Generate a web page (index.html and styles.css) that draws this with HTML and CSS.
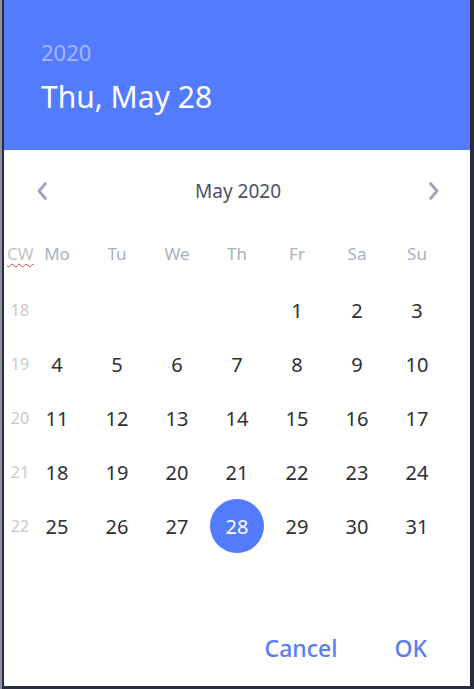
FILE: index.html
```html
<!DOCTYPE html>
<html>
<head>
<meta charset="utf-8">
<link rel="stylesheet" href="styles.css">
</head>
<body>
<div class="frame">
  <div class="card">
    <header class="head">
      <div class="year">2020</div>
      <div class="date">Thu, May 28</div>
    </header>
    <div class="nav">
      <svg class="chev" width="14" height="20" viewBox="0 0 14 20"><path d="M10.5 2.5 L4 10 L10.5 17.5" fill="none" stroke="#9ca3bb" stroke-width="2.8" stroke-linecap="round" stroke-linejoin="round"/></svg>
      <div class="month">May 2020</div>
      <svg class="chev right" width="14" height="20" viewBox="0 0 14 20"><path d="M3.5 2.5 L10 10 L3.5 17.5" fill="none" stroke="#9ca3bb" stroke-width="2.8" stroke-linecap="round" stroke-linejoin="round"/></svg>
    </div>
    <div class="grid">
      <div class="wk cw"><span>CW</span></div>
      <div class="dn">Mo</div><div class="dn">Tu</div><div class="dn">We</div><div class="dn">Th</div><div class="dn">Fr</div><div class="dn">Sa</div><div class="dn">Su</div>

      <div class="wk">18</div>
      <div class="d"></div><div class="d"></div><div class="d"></div><div class="d"></div><div class="d">1</div><div class="d">2</div><div class="d">3</div>

      <div class="wk">19</div>
      <div class="d">4</div><div class="d">5</div><div class="d">6</div><div class="d">7</div><div class="d">8</div><div class="d">9</div><div class="d">10</div>

      <div class="wk">20</div>
      <div class="d">11</div><div class="d">12</div><div class="d">13</div><div class="d">14</div><div class="d">15</div><div class="d">16</div><div class="d">17</div>

      <div class="wk">21</div>
      <div class="d">18</div><div class="d">19</div><div class="d">20</div><div class="d">21</div><div class="d">22</div><div class="d">23</div><div class="d">24</div>

      <div class="wk">22</div>
      <div class="d">25</div><div class="d">26</div><div class="d">27</div><div class="d"><span class="sel">28</span></div><div class="d">29</div><div class="d">30</div><div class="d">31</div>
    </div>
    <div class="actions">
      <span class="btn">Cancel</span>
      <span class="btn">OK</span>
    </div>
  </div>
</div>
</body>
</html>
```

FILE: styles.css
```css
html, body {
  margin: 0;
  padding: 0;
}
body {
  width: 474px;
  height: 689px;
  overflow: hidden;
  font-family: "Noto Sans", "Open Sans", sans-serif;
}
.frame {
  width: 474px;
  height: 689px;
  box-sizing: border-box;
  background: #262c3e;
  border-left: 2px solid #8c919d;
  padding: 0 4px 3px 2px;
}
.card {
  width: 466px;
  height: 686px;
  background: #ffffff;
  overflow: hidden;
}
.head {
  height: 150px;
  box-sizing: border-box;
  background: #537bfe;
  padding: 39px 0 0 37px;
}
.year {
  font-size: 22px;
  line-height: 26px;
  color: #a4b8ff;
}
.date {
  margin-top: 12px;
  font-size: 30px;
  line-height: 40px;
  color: #ffffff;
}
.nav {
  margin-top: 21px;
  height: 40px;
  display: grid;
  grid-template-columns: 1fr auto 1fr;
  align-items: center;
  padding: 0 29px 0 31px;
}
.chev {
  display: block;
}
.chev.right {
  justify-self: end;
}
.month {
  font-size: 19px;
  color: #4b5068;
}
.grid {
  margin-top: 16px;
  display: grid;
  grid-template-columns: 23px repeat(7, 60px);
  grid-auto-rows: 54px;
  grid-template-rows: 56px;
}
.wk {
  display: flex;
  align-items: center;
  justify-content: center;
  padding-left: 9px;
  font-size: 16px;
  color: #c9c9c9;
}
.cw {
  font-size: 17px;
  color: #c4c4c4;
  justify-content: flex-start;
  padding-left: 3px;
  padding-bottom: 3px;
  white-space: nowrap;
}
.cw span {
  text-decoration: underline wavy #e03a3a;
  text-decoration-thickness: 1px;
  text-underline-offset: 3px;
}
.dn {
  display: flex;
  align-items: center;
  justify-content: center;
  padding-bottom: 3px;
  font-size: 17px;
  color: #a9afc4;
}
.d {
  display: flex;
  align-items: center;
  justify-content: center;
  font-size: 20px;
  color: #2e2f33;
}
.sel {
  flex: none;
  width: 54px;
  height: 54px;
  border-radius: 50%;
  background: #537bfe;
  color: #ffffff;
  display: flex;
  align-items: center;
  justify-content: center;
}
.actions {
  margin-top: 75px;
  display: flex;
  justify-content: flex-end;
  align-items: center;
  gap: 57px;
  padding-right: 43px;
  height: 40px;
}
.btn {
  font-size: 23px;
  font-weight: 500;
  color: #5a7cf3;
}
```
